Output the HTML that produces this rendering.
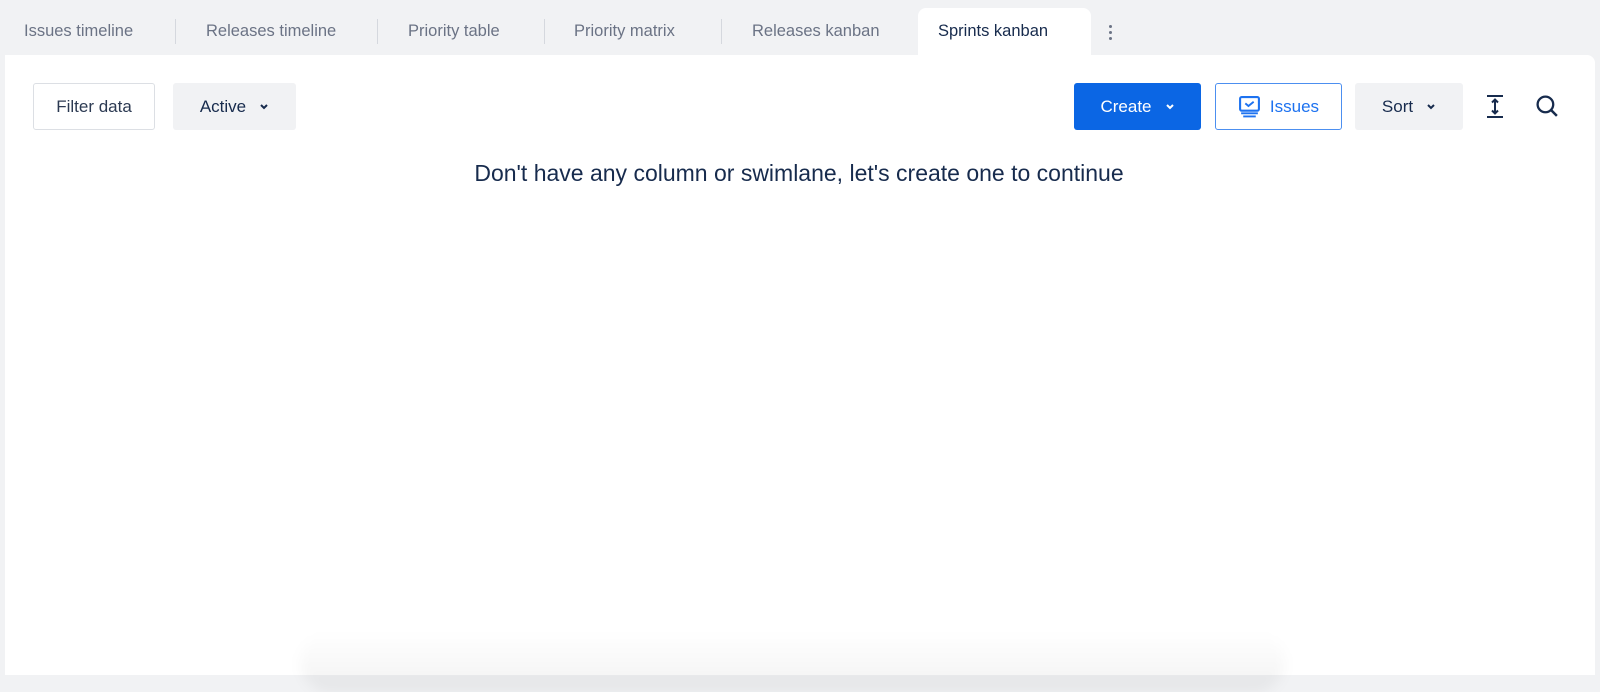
<!DOCTYPE html>
<html><head><meta charset="utf-8"><style>
*{box-sizing:border-box;margin:0;padding:0}
body{width:1600px;height:666px;background:#f1f2f4;font-family:"Liberation Sans",sans-serif;position:relative;overflow:hidden}
.tab{position:absolute;top:8px;height:47px;line-height:47px;font-size:16.5px;color:#6b7385}
.sep{position:absolute;top:19px;width:1px;height:25px;background:#d5d8de}
.active{left:918px;width:173px;background:#fff;border-radius:8px 8px 0 0;color:#172b4d;padding-left:20px}
.panel{position:absolute;left:5px;top:55px;width:1590px;height:620px;background:#fff;border-radius:0 8px 0 0}
.btn{position:absolute;top:83px;height:47px;border-radius:3px;font-size:17px;display:flex;align-items:center;justify-content:center;color:#172b4d}
.chev{margin-left:13px}
</style></head><body>
<div class="tab" style="left:24px">Issues timeline</div>
<div class="sep" style="left:175px"></div>
<div class="tab" style="left:206px">Releases timeline</div>
<div class="sep" style="left:377px"></div>
<div class="tab" style="left:408px">Priority table</div>
<div class="sep" style="left:544px"></div>
<div class="tab" style="left:574px">Priority matrix</div>
<div class="sep" style="left:721px"></div>
<div class="tab" style="left:752px">Releases kanban</div>
<div class="tab active">Sprints kanban</div>
<div style="position:absolute;left:1109px;top:25px;width:3px">
<div style="width:3px;height:3px;border-radius:50%;background:#6b7385;margin-bottom:3px"></div>
<div style="width:3px;height:3px;border-radius:50%;background:#6b7385;margin-bottom:3px"></div>
<div style="width:3px;height:3px;border-radius:50%;background:#6b7385"></div></div>
<div class="panel"></div>
<div style="position:absolute;left:300px;top:632px;width:985px;height:60px;border-radius:40px;background:linear-gradient(rgba(0,0,0,0),rgba(0,0,0,0.05));filter:blur(6px)"></div>
<div class="btn" style="left:33px;width:122px;border:1px solid #dcdfe4;color:#2c3a52">Filter data</div>
<div class="btn" style="left:173px;width:123px;background:#f1f2f4">Active<svg class="chev" width="10" height="8" viewBox="0 0 10 8"><path d="M2 2l3 3 3-3" stroke="#172b4d" stroke-width="2" fill="none"/></svg></div>
<div class="btn" style="left:1074px;width:127px;background:#0b66e4;color:#fff">Create<svg class="chev" width="10" height="8" viewBox="0 0 10 8"><path d="M2 2l3 3 3-3" stroke="#fff" stroke-width="2" fill="none"/></svg></div>
<div class="btn" style="left:1215px;width:127px;border:1px solid #4c8ff0;color:#1d72f0"><svg width="23" height="23" viewBox="0 0 22 22" style="margin-right:9px"><rect x="2" y="2" width="18" height="13" rx="1.5" stroke="#1d72f0" stroke-width="2" fill="none"/><path d="M7 8l3 2.5 5-4" stroke="#1d72f0" stroke-width="1.8" fill="none"/><path d="M3 17.5h16M5 20.5h12" stroke="#1d72f0" stroke-width="1.8"/></svg>Issues</div>
<div class="btn" style="left:1355px;width:108px;background:#f1f2f4">Sort<svg class="chev" width="10" height="8" viewBox="0 0 10 8"><path d="M2 2l3 3 3-3" stroke="#172b4d" stroke-width="2" fill="none"/></svg></div>
<svg style="position:absolute;left:1485px;top:94px" width="20" height="25" viewBox="0 0 20 24"><path d="M2 1.5h16M2 22.5h16M10 5v14M7 8l3-3 3 3M7 16l3 3 3-3" stroke="#172b4d" stroke-width="2" fill="none"/></svg>
<svg style="position:absolute;left:1535px;top:94px" width="25" height="25" viewBox="0 0 24 24"><circle cx="10" cy="10" r="7.5" stroke="#172b4d" stroke-width="2.2" fill="none"/><path d="M15.5 15.5l5.5 5.5" stroke="#172b4d" stroke-width="2.4"/></svg>
<div style="position:absolute;left:0;width:1598px;top:160px;text-align:center;font-size:23px;color:#172b4d">Don't have any column or swimlane, let's create one to continue</div>
</body></html>
